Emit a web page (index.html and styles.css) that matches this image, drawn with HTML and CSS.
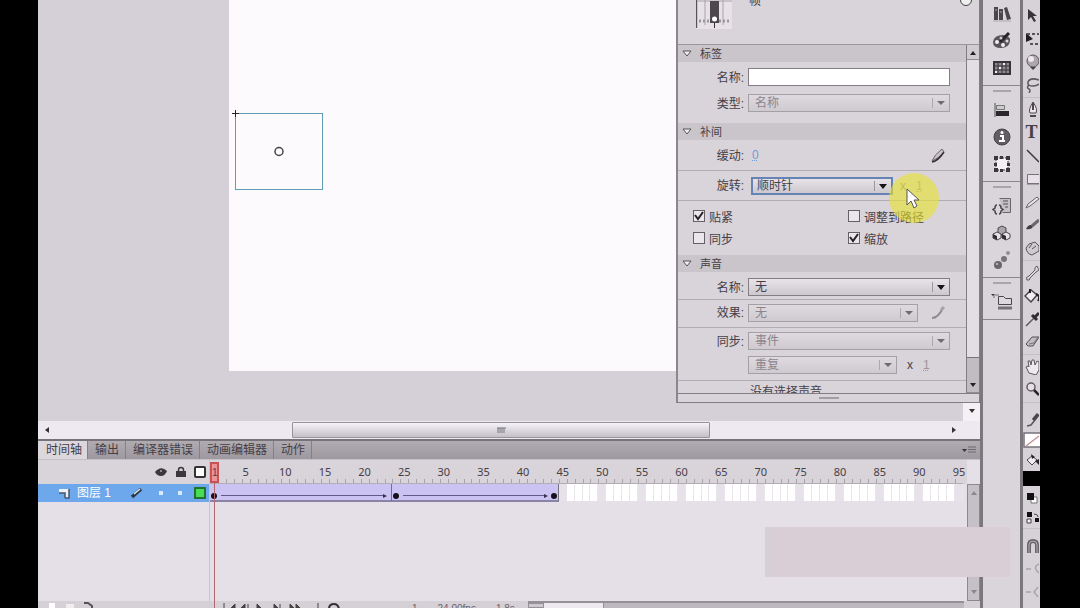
FILE: index.html
```html
<!DOCTYPE html>
<html lang="zh-CN">
<head>
    <meta charset="UTF-8">
    <meta name="viewport" content="width=device-width, initial-scale=1.0">
    <title>Flash</title>
    <link rel="stylesheet" href="styles.css">
</head>
<body>
    <div class="app">
        <main class="main">
            <div class="stage">
                <div class="canvas">
                    <svg class="shape" width="96" height="84" viewBox="0 0 96 84">
                        <rect x="6.500" y="6.500" width="87" height="76" fill="none" stroke="#5b9eb5"/>
                        <path d="M3 6.500h7M6.500 3v7" stroke="#222"/>
                        <circle cx="50" cy="44.500" r="4" fill="none" stroke="#444" stroke-width="1.500"/>
                    </svg>
                </div>
                <button class="stage-down" aria-label="向下滚动"><svg width="8" height="5"><path d="M1 0h6L4 4z" fill="#333"/></svg></button>
            </div>
            <div class="hscroll">
                <button aria-label="向左滚动"><svg width="5" height="8"><path d="M5 1v6L1 4z" fill="#333"/></svg></button>
                <div class="hscroll-track"><div class="hscroll-thumb"><svg width="9" height="6"><path d="M0 1h9M1 1v5M3 1v5M5 1v5M7 1v5" stroke="#777"/></svg></div></div>
                <button aria-label="向右滚动"><svg width="5" height="8"><path d="M0 1v6l4-3z" fill="#333"/></svg></button>
            </div>

            <nav class="tabs">
                <button class="tab active">时间轴</button>
                <button class="tab">输出</button>
                <button class="tab">编译器错误</button>
                <button class="tab">动画编辑器</button>
                <button class="tab">动作</button>
                <button class="tabs-menu" aria-label="面板菜单"><svg width="14" height="8"><path d="M0 3h5L2.500 6z" fill="#333"/><path d="M6 1h8M6 3.500h8M6 6h8" stroke="#706a70"/></svg></button>
            </nav>

            <section class="timeline">
                <div class="layers">
                    <div class="layers-head">
                        <svg width="14" height="10" viewBox="0 0 14 10"><path d="M1 5Q7-2 13 4Q11 9 7 9Q3 9 1 5z" fill="#3c363d"/><circle cx="7" cy="4" r="1" fill="#aaa"/></svg>
                        <svg width="10" height="12" viewBox="0 0 10 12"><path d="M2.500 6V4a2.500 2.500 0 0 1 5 0v2" fill="none" stroke="#3c363d" stroke-width="1.500"/><path d="M0 5h10v6H0z" fill="#3c363d"/></svg>
                        <svg width="12" height="12" viewBox="0 0 12 12"><rect x="1" y="1" width="10" height="10" rx="1" fill="#fff" stroke="#333" stroke-width="2"/></svg>
                    </div>
                    <div class="layer">
                        <svg width="12" height="12" viewBox="0 0 12 12"><path d="M1 2h10v9H7V6H1z" fill="#edf0f8"/><path d="M11 2v9H7M1 6h6v5" fill="none" stroke="#46546c" stroke-width="1.500"/></svg>
                        <span class="layer-name">图层 1</span>
                        <svg width="14" height="12" viewBox="0 0 14 12"><path d="M2 10L11 2" stroke="#2b3948" stroke-width="3.500"/><path d="M4 7l6-5" stroke="#dfe8e8" stroke-width="1.500"/></svg>
                        <i class="dot"></i>
                        <i class="dot"></i>
                        <i class="outline"></i>
                    </div>
                </div>
                <div class="frames">
                    <div class="ruler">
                        <div><span>5</span></div><div><span>10</span></div><div><span>15</span></div><div><span>20</span></div><div><span>25</span></div>
                        <div><span>30</span></div><div><span>35</span></div><div><span>40</span></div><div><span>45</span></div><div><span>50</span></div>
                        <div><span>55</span></div><div><span>60</span></div><div><span>65</span></div><div><span>70</span></div><div><span>75</span></div>
                        <div><span>80</span></div><div><span>85</span></div><div><span>90</span></div><div><span>95</span></div>
                    </div>
                    <div class="track">
                        <div class="tween first"><i class="key"></i><i class="line"></i><i class="tip"></i></div>
                        <div class="tween second"><i class="key"></i><i class="line"></i><i class="tip"></i><i class="key"></i></div>
                        <div class="cells one"></div>
                        <div class="cells"></div><div class="cells"></div><div class="cells"></div><div class="cells"></div><div class="cells"></div>
                        <div class="cells"></div><div class="cells"></div><div class="cells"></div><div class="cells"></div><div class="cells"></div>
                    </div>
                    <div class="playhead"><span>1</span></div>
                </div>
                <div class="vscroll timeline-scroll">
                    <button aria-label="向上滚动"><svg width="8" height="5"><path d="M1 5h6L4 1z" fill="#8b858c"/></svg></button>
                    <button aria-label="向下滚动"><svg width="8" height="5"><path d="M1 0h6L4 4z" fill="#8b858c"/></svg></button>
                </div>
            </section>

            <footer class="status">
                <div class="status-left">
                    <svg width="50" height="8" viewBox="0 0 50 8"><path d="M3 2h6v6H3z" fill="#fff"/><path d="M20 3h8v5h-8z" fill="#eee"/><path d="M38 2h4l4 3v3" fill="none" stroke="#555" stroke-width="2"/></svg>
                </div>
                <svg class="playback" width="130" height="8" viewBox="0 0 130 8"><path d="M4 2v6M15 3l-5 5h5zM25 3l-5 5h5zM28 3v5M37 3l5 5h-5zM54 3l5 5h-5zM60 3v5M70 3l5 5h-5zM76 3l5 5h-5zM98 2v6" fill="#444" stroke="#444"/><path d="M109 8Q109 3 114 3Q118 3 119 8" fill="none" stroke="#333" stroke-width="2"/></svg>
                <div class="status-info"><span>1</span><span>24.00fps</span><span>1.8s</span></div>
                <div class="status-scroll"><i class="status-arrow"></i><i class="status-thumb"></i></div>
            </footer>

            <aside class="panel">
                <header class="panel-head">
                    <svg width="36" height="36" viewBox="0 0 36 36"><path d="M0 0h36v36H0z" fill="#e8e2e8"/><path d="M1 0v35M0 8h36M9 0v32M27 0v32" stroke="#aaa3aa"/><path d="M.5 0v35" stroke="#555"/><path d="M3 28h30" stroke="#999" stroke-dasharray="2 2" stroke-width="3"/><path d="M14 8h9v22h-9z" fill="#4d474e"/><circle cx="18.500" cy="26" r="2.500" fill="#fff"/><path d="M18.500 29v6" stroke="#333"/></svg>
                    <h2>帧</h2>
                    <svg width="14" height="14" viewBox="0 0 14 14"><circle cx="7" cy="7" r="5.500" fill="#eee" stroke="#444"/></svg>
                </header>
                <div class="panel-body">
                    <div class="panel-content">
                        <h3><svg width="10" height="7"><path d="M1 1h8L5 6z" fill="#f4eff4" stroke="#555"/></svg>标签</h3>
                        <div class="fields">
                            <div class="row"><label for="label-name">名称:</label><input id="label-name" type="text"></div>
                            <div class="row"><label for="label-type">类型:</label><select id="label-type" disabled><option>名称</option></select></div>
                        </div>
                        <h3><svg width="10" height="7"><path d="M1 1h8L5 6z" fill="#f4eff4" stroke="#555"/></svg>补间</h3>
                        <div class="row ease">
                            <span>缓动:</span><a class="value" href="#">0</a>
                            <button class="pencil" aria-label="编辑缓动"><svg width="16" height="16" viewBox="0 0 16 16"><path d="M2 14Q4 8 12 2l2 3Q8 12 2 14z" fill="#c8c2c8" stroke="#6e686f"/><path d="M2 15Q8 14 14 5" fill="none" stroke="#332e34" stroke-width="1.500"/></svg></button>
                        </div>
                        <div class="row rotate">
                            <label for="rotate">旋转:</label><select id="rotate" class="focus"><option>顺时针</option></select>
                            <span class="times">x</span><a class="value" href="#">1</a>
                        </div>
                        <div class="checks">
                            <label><input type="checkbox" checked>贴紧</label>
                            <label><input type="checkbox">调整到路径</label>
                            <label><input type="checkbox">同步</label>
                            <label><input type="checkbox" checked>缩放</label>
                        </div>
                        <h3><svg width="10" height="7"><path d="M1 1h8L5 6z" fill="#f4eff4" stroke="#555"/></svg>声音</h3>
                        <div class="row sound"><label for="sound-name">名称:</label><select id="sound-name"><option>无</option></select></div>
                        <div class="row effect">
                            <label for="effect">效果:</label><select id="effect" disabled><option>无</option></select>
                            <button class="pencil" aria-label="编辑声音封套" disabled><svg width="16" height="16" viewBox="0 0 16 16"><path d="M2 13Q8 13 13 3" fill="none" stroke="#8f8990" stroke-width="2"/><path d="M11 5l3-3" stroke="#aaa4aa" stroke-width="3"/></svg></button>
                        </div>
                        <div class="row sync"><label for="sync">同步:</label><select id="sync" disabled><option>事件</option></select></div>
                        <div class="row repeat">
                            <span></span><select id="repeat" aria-label="重复" disabled><option>重复</option></select>
                            <span class="times">x</span><span class="value off">1</span>
                        </div>
                        <p class="note">没有选择声音</p>
                    </div>
                    <div class="vscroll panel-scroll">
                        <button aria-label="向上滚动"><svg width="8" height="5"><path d="M1 5h6L4 1z" fill="#222"/></svg></button>
                        <button class="grow" aria-label="向下滚动"><svg width="8" height="5"><path d="M1 0h6L4 4z" fill="#222"/></svg></button>
                    </div>
                </div>
                <div class="grip"></div>
                <svg class="pointer" width="50" height="50" viewBox="0 0 50 50"><circle cx="25" cy="25" r="25" fill="#e8e52b" fill-opacity=".6"/><path d="M18 16v16l4-4 3 7 3-2-3-6h5z" fill="#fff" stroke="#555"/></svg>
            </aside>
        </main>

        <aside class="dock">
            <div class="dock-group">
                <button aria-label="库"><svg width="20" height="18" viewBox="0 0 20 18"><path d="M2 2h4v13H2zM7 4h4v11H7z" fill="#4b454c"/><path d="M12 3l3-1 4 12-4 1z" fill="#4b454c"/><path d="M1 16h18M3 5h2M8 7h2" stroke="#aaa"/></svg></button>
                <button aria-label="颜色"><svg width="20" height="18" viewBox="0 0 20 18"><path d="M1 10Q2 3 11 3Q19 4 18 9Q17 16 9 16Q1 16 1 10z" fill="#59535a"/><path d="M8 10l9-9" stroke="#29242a" stroke-width="3"/><circle cx="5" cy="10" r="2" fill="#eee"/><circle cx="9" cy="6" r="1.500" fill="#ccc"/><circle cx="11" cy="13" r="2" fill="#eee"/><circle cx="15" cy="9" r="1.500" fill="#ddd"/></svg></button>
                <button aria-label="样本"><svg width="18" height="14" viewBox="0 0 18 14"><path d="M1 1h16v12H1z" fill="#8e888f" stroke="#38323a" stroke-width="2"/><path d="M5 1v12M9 1v12M13 1v12M1 5h16M1 9h16" stroke="#38323a"/><path d="M6 6h2v2H6zM10 2h2v2h-2zM2 10h2v2H2z" fill="#eee"/></svg></button>
            </div>
            <div class="dock-group">
                <i class="handle"></i>
                <button aria-label="对齐"><svg width="18" height="16" viewBox="0 0 18 16"><path d="M2 1v14" stroke="#555"/><path d="M3.500 3.500h8v4h-8z" fill="#ccc" stroke="#777"/><path d="M3 9h13v5H3z" fill="#2c262d"/></svg></button>
                <button aria-label="信息"><svg width="18" height="18" viewBox="0 0 18 18"><circle cx="9" cy="9" r="8" fill="#625c63" stroke="#454047"/><path d="M7 8h3v5M6 13h6" stroke="#fff" stroke-width="2" fill="none"/><circle cx="9" cy="4.500" r="1.500" fill="#fff"/></svg></button>
                <button aria-label="变形"><svg width="18" height="18" viewBox="0 0 18 18"><path d="M3 3h12v12H3z" fill="#f4f0f4" stroke="#3c363d" stroke-dasharray="2 1"/><path d="M1 1h4v4H1zM7 1h3v3H7zM13 1h4v4h-4zM1 8h3v3H1zM14 8h3v3h-3zM1 13h4v4H1zM7 14h3v3H7zM13 13h4v4h-4z" fill="#3c363d"/></svg></button>
            </div>
            <div class="dock-group">
                <i class="handle"></i>
                <button aria-label="代码片断"><svg width="20" height="18" viewBox="0 0 20 18"><path d="M7.500 1.500h11v14h-8" fill="#c5bfc6" stroke="#6a646b"/><path d="M11 4h5M11 7h5M13 10h3" stroke="#8d878e" stroke-width="2"/><path d="M5 8Q3 8 3 11L1 12.500L3 14Q3 17 5 17M7 8Q9 8 9 11L11 12.500L9 14Q9 17 7 17" fill="none" stroke="#4a444b" stroke-width="1.500"/></svg></button>
                <button aria-label="组件"><svg width="20" height="18" viewBox="0 0 20 18"><path d="M6 4l4-2 4 2v5l-4 2-4-2z" fill="#aaa4ab" stroke="#4a444b"/><path d="M1 10l4-2 4 2v4l-4 2-4-2zM10 10l4-2 4 2v4l-4 2-4-2z" fill="#e9e4e9" stroke="#4a444b"/><path d="M1 10l4 2v4l-4-2zM10 10l4 2v4l-4-2z" fill="#332e34"/></svg></button>
                <button aria-label="动画预设"><svg width="20" height="20" viewBox="0 0 20 20"><circle cx="6" cy="15" r="4" fill="#6b656c"/><circle cx="12" cy="9" r="3" fill="#79737a"/><circle cx="16" cy="3" r="2" fill="#928c93"/><circle cx="5" cy="14" r="1" fill="#ccc"/></svg></button>
            </div>
            <div class="dock-group">
                <i class="handle"></i>
                <button aria-label="项目"><svg width="22" height="18" viewBox="0 0 22 18"><path d="M0 1h4L2 3z" fill="#333"/><path d="M4 2h4M3 2v3" stroke="#777"/><path d="M7.500 11.500v-8h5l2 2h6v6z" fill="#ddd7de" stroke="#4a444b"/><path d="M7 15h14" stroke="#777178" stroke-width="3"/></svg></button>
            </div>
        </aside>

        <aside class="tools">
            <button aria-label="部分选取"><svg width="14" height="16" viewBox="0 0 14 16"><path d="M3 1v11l3-3 3 5 2-1-3-5h4z" fill="#39333a"/></svg></button>
            <button aria-label="任意变形"><svg width="14" height="16" viewBox="0 0 14 16"><path d="M1 2v9l7-3z" fill="#221d23"/><path d="M2 3h12M5 13h9" stroke="#555" stroke-dasharray="3 2" stroke-width="2"/></svg></button>
            <button aria-label="3D 旋转"><svg width="14" height="18" viewBox="0 0 14 18"><circle cx="8" cy="8" r="6" fill="#aca6ad" stroke="#5c565d"/><circle cx="6" cy="6" r="3" fill="#eee8ee"/><path d="M5 14l3 3 3-3z" fill="#444"/></svg></button>
            <button aria-label="套索"><svg width="14" height="16" viewBox="0 0 14 16"><path d="M14 3Q5 0 3 5Q2 9 8 9Q12 9 14 7M4 8Q1 11 4 12Q6 13 4 16" fill="none" stroke="#5c565d" stroke-width="1.500"/></svg></button>
            <hr>
            <button aria-label="钢笔"><svg width="14" height="18" viewBox="0 0 14 18"><path d="M8 1Q3 9 5 12h6Q13 8 8 1z" fill="#eee8ee" stroke="#4d474e"/><path d="M8 2v7M5 15h6" stroke="#4d474e" stroke-width="2"/></svg></button>
            <button class="text-tool" aria-label="文本">T</button>
            <button aria-label="线条"><svg width="14" height="14" viewBox="0 0 14 14"><path d="M2 1l12 12" stroke="#3d373e" stroke-width="1.500"/></svg></button>
            <button aria-label="矩形"><svg width="14" height="14" viewBox="0 0 14 14"><path d="M15 2.500H2.500v9H15" fill="#e8e2e8" stroke="#77717a"/><path d="M2 12h12" stroke="#77717a"/></svg></button>
            <button aria-label="铅笔"><svg width="14" height="14" viewBox="0 0 14 14"><path d="M1 13l2-4 9-7 2 2-9 7z" fill="#eae5ea" stroke="#666067"/></svg></button>
            <button aria-label="刷子"><svg width="14" height="14" viewBox="0 0 14 14"><path d="M1 11Q4 5 8 8Q7 12 1 11z" fill="#443e45"/><path d="M7 8l7-6" stroke="#6b656c" stroke-width="3"/></svg></button>
            <button aria-label="Deco"><svg width="14" height="16" viewBox="0 0 14 16"><path d="M1 8l3-4 6-2 4 4v5l-7 4q-5-1-6-7z" fill="#cfc9d0" stroke="#59535a"/><path d="M4 8l3-4M7 9l4-3" stroke="#59535a"/></svg></button>
            <hr>
            <button aria-label="骨骼"><svg width="14" height="16" viewBox="0 0 14 16"><path d="M2 15q-2-3 2-4l6-6q-1-3 2-4l2 4-3 2-6 6q0 3-3 2z" fill="#ddd7de" stroke="#5f5960"/></svg></button>
            <button aria-label="颜料桶"><svg width="15" height="16" viewBox="0 0 15 16"><path d="M1 8l6-6 6 5-6 7z" fill="#f2edf2" stroke="#4a444b" stroke-width="1.500"/><path d="M6 5V1M12 6q5 2 2 7" stroke="#221d23" stroke-width="2" fill="none"/></svg></button>
            <button aria-label="滴管"><svg width="14" height="16" viewBox="0 0 14 16"><path d="M1 15l9-9" stroke="#5c565d" stroke-width="1.500"/><path d="M7 4l5 5M10 6l4-4" stroke="#302a31" stroke-width="3"/></svg></button>
            <button aria-label="橡皮擦"><svg width="14" height="16" viewBox="0 0 14 16"><path d="M1 10l6-7h7l-6 9H3z" fill="#c0bac1" stroke="#554f56"/><path d="M4 10l5-1 4-6" fill="none" stroke="#777"/></svg></button>
            <hr>
            <button aria-label="手形"><svg width="14" height="16" viewBox="0 0 14 16"><path d="M4 14L1 8l2-1 1 1-1-6h2l1 4 1-5h2l1 5 2-4 2 1v8l-3 5z" fill="#eee9ee" stroke="#5c565d"/></svg></button>
            <button aria-label="缩放"><svg width="14" height="16" viewBox="0 0 14 16"><circle cx="6" cy="5" r="4" fill="#e6e0e6" stroke="#625c63" stroke-width="1.500"/><path d="M9 8l5 5" stroke="#29242a" stroke-width="2.500"/></svg></button>
            <hr>
            <button class="after-gap" aria-label="笔触颜色"><svg width="14" height="14" viewBox="0 0 14 14"><path d="M2 13l4-1 8-10" fill="none" stroke="#5c565d" stroke-width="1.500"/><path d="M8 7l5-6" stroke="#4a444b" stroke-width="3"/></svg></button>
            <button class="swatch" aria-label="无笔触"><svg width="17" height="16" viewBox="0 0 17 16"><path d="M1 1h17v14H1z" fill="#fff" stroke="#77717a" stroke-width="1.500"/><path d="M3 14L16 4" stroke="#c49097" stroke-width="1.500"/></svg></button>
            <button aria-label="填充颜色"><svg width="14" height="14" viewBox="0 0 14 14"><path d="M2 7l5-4 5 4-5 5z" fill="#f2edf2" stroke="#4a444b"/><path d="M6 1l4 3-3 2zM10 8l4-2v6z" fill="#29242a"/></svg></button>
            <button class="swatch fill" aria-label="黑色填充"></button>
            <button aria-label="黑白"><svg width="14" height="14" viewBox="0 0 14 14"><path d="M6 6h6v6H6z" fill="#fff" stroke="#777"/><path d="M2 2h7v7H2z" fill="#111"/></svg></button>
            <button class="short" aria-label="交换颜色"><svg width="14" height="14" viewBox="0 0 14 14"><path d="M2 1h5v5H2zM10 7h4v4h-4z" fill="#111"/><path d="M9 3q4 0 4 3M2 8h4v4H2z" fill="#eee" stroke="#444"/></svg></button>
            <hr>
            <button class="after-gap" aria-label="贴紧至对象"><svg width="14" height="16" viewBox="0 0 14 16"><path d="M4 15V7q0-4 4-4t4 4v8" fill="none" stroke="#69636a" stroke-width="4"/><path d="M4 15V7q0-4 4-4t4 4v8" fill="none" stroke="#b4aeb5"/></svg></button>
            <button aria-label="平滑"><svg width="14" height="14" viewBox="0 0 14 14"><path d="M1 7h5M14 2q-7 3 0 9" fill="none" stroke="#aaa4ab" stroke-width="1.500"/></svg></button>
            <button aria-label="伸直"><svg width="14" height="14" viewBox="0 0 14 14"><path d="M1 7h5M13 2l-4 5 4 5" fill="none" stroke="#aaa4ab" stroke-width="1.500"/></svg></button>
        </aside>
        <div class="mask"></div>
    </div>
</body>
</html>
```
FILE: styles.css
```css
* {
    box-sizing: border-box;
}
body {
    margin: 0;
    background: #000;
    color: #454046;
    font-family: "Liberation Sans", "Noto Sans CJK SC", sans-serif;
    font-size: 12px;
}
button {
    display: flex;
    align-items: center;
    justify-content: center;
    margin: 0;
    padding: 0;
    border: none;
    background: none;
    color: inherit;
    font: inherit;
}
svg {
    display: block;
    flex: none;
}
h2, h3, p {
    margin: 0;
    font-weight: normal;
}
.app {
    position: relative;
    display: grid;
    grid-template-columns: 1fr 40px 20px;
    height: 100vh;
    margin: 0 40px 0 38px;
    overflow: hidden;
    background: #d9d3da;
}
.main {
    position: relative;
    display: flex;
    flex-direction: column;
    min-width: 0;
}

/* stage */
.stage {
    display: flex;
    flex: 1;
    align-items: flex-end;
    min-height: 0;
    background: #d5d0d7;
}
.canvas {
    flex: 1;
    align-self: stretch;
    margin: 0 0 50px 191px;
    padding: 107px 0 0;
    background: #fcfafc;
}
.stage-down {
    width: 17px;
    height: 19px;
    background: #f4f0f5;
}
.hscroll {
    display: flex;
    height: 18px;
    padding: 1px 0;
    background: #eee9f0;
}
.hscroll button {
    width: 16px;
}
.hscroll > button:last-child {
    margin-right: 18px;
}
.hscroll-track {
    display: grid;
    grid-template-columns: 238fr 418fr 236fr;
    flex: 1;
}
.hscroll-thumb {
    display: flex;
    grid-column: 2;
    align-items: center;
    justify-content: center;
    height: 16px;
    border: 1px solid #979198;
    border-radius: 1px;
    background: linear-gradient(#f6f2f8, #c5bfc8);
}

/* tabs */
.tabs {
    display: flex;
    height: 21px;
    border-top: 2px solid #77717a;
    border-bottom: 1px solid #c5bfc6;
    background: linear-gradient(#b0aab1, #9e98a0);
}
.tab {
    padding: 0 6px 0 7px;
    border-right: 1px solid #857f86;
    line-height: 18px;
}
.tab.active {
    padding: 0 5px 0 8px;
    background: #dcd6dd;
}
.tabs-menu {
    margin: 0 4px 0 auto;
}

/* timeline */
.timeline {
    display: flex;
    height: 141px;
    background: #e5e0e7;
}
.layers {
    width: 172px;
    border-right: 1px solid #cbc4cc;
}
.layers-head {
    display: flex;
    align-items: center;
    justify-content: flex-end;
    gap: 8px;
    height: 24px;
    padding-right: 3px;
    background: #d9d3da;
}
.layer {
    display: flex;
    align-items: center;
    height: 18px;
    padding: 0 3px 0 20px;
    background: #6da7ec;
    color: #fff;
}
.layer-name {
    flex: 1;
    margin-left: 7px;
    line-height: 16px;
}
.dot {
    width: 4px;
    height: 4px;
    margin-left: 15px;
    background: #d7eaff;
}
.outline {
    width: 12px;
    height: 12px;
    margin-left: 12px;
    border: 2px solid #21712f;
    background: #49dc55;
}
.frames {
    position: relative;
    flex: 1;
    padding-right: 4px;
    background: linear-gradient(#d9d3da 24px, transparent 24px);
}
.ruler {
    display: flex;
    height: 24px;
    border-bottom: 1px solid #b3adb4;
}
.ruler div {
    display: flex;
    flex: 1;
    justify-content: flex-end;
    background: repeating-linear-gradient(to right, #a8a2a9 0 1px, transparent 1px 20%) bottom / 100% 4px no-repeat;
}
.ruler span {
    display: flex;
    justify-content: center;
    width: 20%;
    font-family: "Noto Sans", sans-serif;
    font-size: 11px;
    line-height: 24px;
}
.track {
    display: grid;
    grid-template-columns: repeat(95, 1fr);
    height: 18px;
}
.cells {
    grid-column: span 5;
    margin-bottom: 1px;
    background:
        repeating-linear-gradient(to right, transparent 0 calc(20% - 1px), #eae5ec calc(20% - 1px) 20%),
        linear-gradient(to right, #fff 80%, #e7e2e9 80%);
}
.cells.one {
    grid-column: span 1;
    background: #e7e2e9;
}
.tween {
    display: flex;
    align-items: center;
    padding: 7px 1px 0;
    border-right: 1px solid #77717f;
    border-bottom: 2px solid #8984a5;
    background: #cbc3f2;
}
.tween.first {
    grid-column: span 23;
}
.tween.second {
    grid-column: span 21;
}
.key {
    width: 6px;
    height: 6px;
    border-radius: 50%;
    background: #15101c;
}
.line {
    flex: 1;
    height: 1px;
    margin-left: 4px;
    background: #625988;
}
.tip {
    margin-right: 3px;
    border: 2px solid transparent;
    border-left: 4px solid #39304e;
    border-right: none;
}
.playhead {
    position: absolute;
    top: 2px;
    bottom: -8px;
    left: 0;
    width: 9px;
    background: linear-gradient(#b3686f, #b3686f) center / 1px 100% no-repeat;
}
.playhead span {
    display: block;
    height: 21px;
    border: 2px solid #c95158;
    background: #ed9498;
    font-size: 10px;
    line-height: 17px;
    text-align: center;
}
.vscroll {
    display: flex;
    flex-direction: column;
    justify-content: space-between;
    width: 13px;
}
.vscroll button {
    height: 15px;
}
.timeline-scroll {
    margin-top: 24px;
    border: 1px solid #8d878e;
    background: #c5bfc6;
}

/* status bar */
.status {
    display: flex;
    height: 7px;
    overflow: hidden;
    background: #d5cfd6;
}
.status-left {
    width: 182px;
    padding-left: 8px;
}
.status-info {
    display: flex;
    flex: none;
    gap: 20px;
    width: 178px;
    padding: 2px 0 0 62px;
    color: #6b656c;
    font-size: 10px;
    line-height: 12px;
}
.status-scroll {
    display: flex;
    flex: 1;
    margin-right: 16px;
    border-top: 2px solid #959097;
    background: #bdb7be;
}
.status-arrow {
    width: 16px;
    border: 1px solid #959097;
    background: #cec8cf;
}
.status-thumb {
    width: 60px;
    border-right: 1px solid #959097;
    background: #eee9ef;
}

/* properties panel floats over the stage */
.panel {
    position: absolute;
    top: -20px;
    right: 0;
    width: 304px;
    border: 1px solid #827c83;
    border-left: 2px solid #8c868d;
    background: #d9d3da;
}
.panel-head {
    display: flex;
    align-items: flex-start;
    height: 64px;
    padding: 12px 6px 0 18px;
    border-bottom: 1px solid #9b959c;
}
.panel-head h2 {
    flex: 1;
    margin-left: 17px;
    font-size: 12px;
    line-height: 16px;
}
.panel-body {
    display: flex;
    height: 349px;
    overflow: hidden;
    border-bottom: 1px solid #827c83;
}
.panel-content {
    flex: 1;
}
.panel h3 {
    display: flex;
    align-items: center;
    gap: 8px;
    height: 17px;
    padding-left: 4px;
    background: #cac4cb;
    font-size: 11px;
    line-height: 14px;
}
.row {
    display: grid;
    grid-template-columns: 66px 202px;
    column-gap: 4px;
    align-items: center;
    height: 26px;
}
.row > :first-child {
    padding-bottom: 2px;
    text-align: right;
}
.fields {
    padding: 2px 0 7px;
}
.row.ease {
    grid-template-columns: 66px 1fr 16px;
    height: 31px;
    padding-right: 20px;
    border-bottom: 1px solid #b2acb3;
}
.row.rotate {
    grid-template-columns: 66px 142px 9px 20px;
    column-gap: 7px;
    height: 30px;
    border-bottom: 1px solid #b2acb3;
}
.row.sound {
    height: 28px;
    padding-top: 3px;
    border-bottom: 1px solid #b2acb3;
}
.row.effect {
    grid-template-columns: 66px 170px 1fr;
    height: 28px;
    padding: 0 20px 2px 0;
    border-bottom: 1px solid #b2acb3;
}
.row.sync {
    height: 28px;
    padding-bottom: 2px;
}
.row.repeat {
    grid-template-columns: 66px 149px 12px 20px;
    height: 24px;
    padding-bottom: 6px;
}
.row.repeat .times {
    text-align: right;
}
.pencil {
    justify-self: end;
}
input[type="text"], select {
    width: 100%;
    height: 18px;
    margin: 0;
    padding: 0 6px;
    border: 1px solid #837d84;
    border-radius: 0;
    color: #454046;
    font: inherit;
    line-height: 16px;
}
input[type="text"] {
    background: #fff;
}
select {
    appearance: none;
    background:
        url("data:image/svg+xml,%3Csvg xmlns='http://www.w3.org/2000/svg' width='18' height='16'%3E%3Cpath d='M1.5 3v10' stroke='%23999'/%3E%3Cpath d='M6 6h8l-4 5z' fill='%23151515'/%3E%3C/svg%3E") right center no-repeat,
        linear-gradient(#e8e2e9, #cdc7ce);
}
select:disabled {
    border-color: #a59fa6;
    background:
        url("data:image/svg+xml,%3Csvg xmlns='http://www.w3.org/2000/svg' width='18' height='16'%3E%3Cpath d='M1.5 3v10' stroke='%23aaa'/%3E%3Cpath d='M6 6h8l-4 4z' fill='%23706a71'/%3E%3C/svg%3E") right center no-repeat,
        linear-gradient(#dfd9e0, #cfc9d0);
    color: #8b858c;
    opacity: 1;
}
select.focus {
    border: 2px solid #6583b4;
    padding: 0 4px;
    line-height: 14px;
}
.value {
    color: #6f9dd8;
    text-decoration: underline dotted;
}
.row.ease .value {
    padding-left: 4px;
}
.row.rotate .value, .value.off {
    padding-left: 6px;
    color: #9b959c;
}
.row.rotate .value {
    padding-left: 0;
}
.row.rotate .times {
    color: #8b858c;
}
.checks {
    display: grid;
    grid-template-columns: 155px 1fr;
    align-content: center;
    row-gap: 4px;
    height: 54px;
    padding: 0 0 2px 15px;
}
.checks label {
    display: flex;
    align-items: center;
    gap: 4px;
    height: 18px;
}
input[type="checkbox"] {
    appearance: none;
    width: 12px;
    height: 12px;
    margin: 0;
    border: 1px solid #656067;
    background: #ebe6ec;
}
input[type="checkbox"]:checked {
    background: #ebe6ec url("data:image/svg+xml,%3Csvg xmlns='http://www.w3.org/2000/svg' width='10' height='10'%3E%3Cpath d='M1 4l3 4 5-7' fill='none' stroke='%23222' stroke-width='2'/%3E%3C/svg%3E") center no-repeat;
}
.note {
    padding-left: 72px;
    border-top: 1px solid #b2acb3;
    line-height: 22px;
}
.panel-scroll {
    border-left: 1px solid #827c83;
    background: #e3dde4;
}
.panel-scroll button {
    border-bottom: 1px solid #918b92;
    background: #d0cad1;
}
.panel-scroll .grow {
    align-items: flex-end;
    height: 36px;
    padding-bottom: 4px;
    border-top: 1px solid #77717a;
    background: #c1bbc2;
}
.grip {
    width: 20px;
    height: 8px;
    margin: 0 auto;
    background: linear-gradient(#a39da4, #a39da4) 0 3px / 20px 2px no-repeat;
}
.pointer {
    position: absolute;
    top: 192px;
    right: 40px;
}

/* collapsed panels */
.dock {
    border-left: 3px solid #7c767d;
    background: #dad4db;
}
.dock-group {
    padding-bottom: 4px;
    border-bottom: 1px solid #8b858c;
}
.dock-group button {
    width: 100%;
    height: 27px;
}
.handle {
    display: block;
    width: 18px;
    margin: 4px auto;
    border-top: 2px solid #aaa4ab;
}
.tools {
    padding-top: 4px;
    border-left: 3px solid #7c767d;
    background: #d7d1d8;
    overflow: hidden;
}
.tools button {
    width: 100%;
    height: 23px;
}
.tools hr {
    height: 2px;
    margin: 0;
    border: none;
    border-bottom: 1px solid #c5bfc6;
}
.tools .text-tool {
    font-family: "Liberation Serif", serif;
    font-size: 18px;
    font-weight: bold;
}
.tools .after-gap {
    margin-top: 5px;
}
.tools .swatch {
    height: 17px;
}
.tools .swatch.fill {
    height: 15px;
    background: #000;
}
.tools .short {
    height: 18px;
}
.mask {
    position: absolute;
    right: 30px;
    bottom: 31px;
    width: 245px;
    height: 50px;
    background: linear-gradient(to right, #d6cfd6 8px, #d9ced6 8px);
}
```
